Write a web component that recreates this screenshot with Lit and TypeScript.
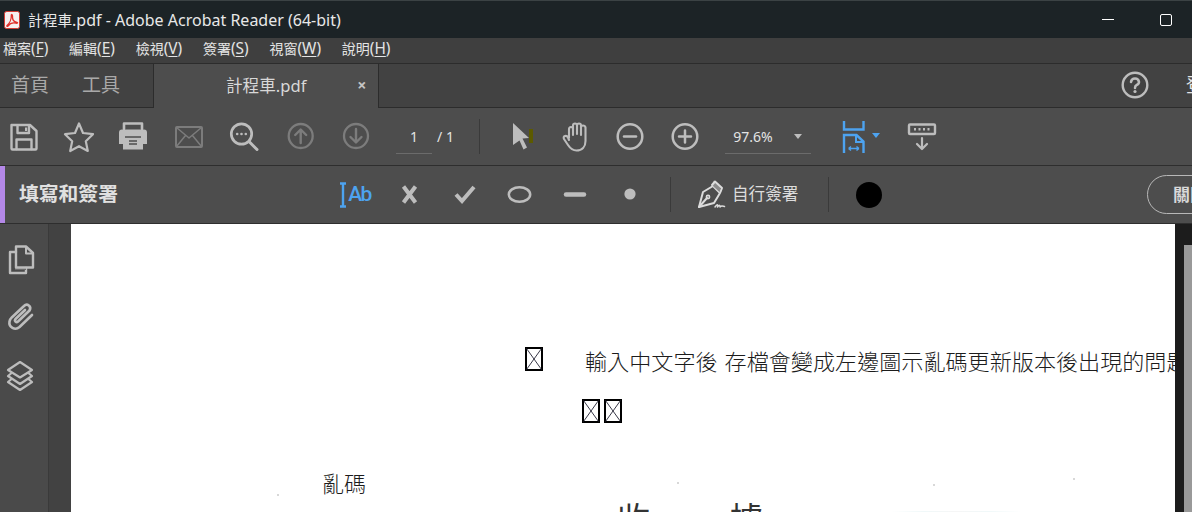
import { LitElement, html, css, svg } from "lit";
import { customElement } from "lit/decorators.js";

const ic = (w: number, h: number, body: unknown, cls = "") =>
  html`<svg class="ic ${cls}" width=${w} height=${h} viewBox="0 0 ${w} ${h}" fill="none" stroke="currentColor" stroke-linecap="round" stroke-linejoin="round">${body}</svg>`;

const icons = {
  pdf: ic(16, 18, svg`<rect x="0.5" y="0.5" width="15" height="17" rx="2" fill="#f6f0ef" stroke="#d23c34"/><path d="M3 14.5C5.5 12.5 7.5 8 7.3 4.5 7.2 3 8.6 3.2 8.5 5 8.2 8.5 10 11 13 11.3 14 11.5 13.6 12.6 12 12.2 9 11.5 6 12.2 4 15 3.2 15.8 2.4 15 3 14.5Z" stroke="#e0322b" stroke-width="1.3"/>`),
  save: ic(32, 32, svg`<g stroke-width="2.4"><path d="M3.5 4H22L28.5 10V27.5Q28.5 28.5 27.5 28.5H4.5Q3.5 28.5 3.5 27.5Z"/><path d="M9.5 4.5V12H21V4.5M8.5 28V18.5H23.5V28"/></g><rect x="17" y="6.5" width="2.2" height="3.5" fill="currentColor" stroke="none"/>`),
  star: ic(32, 32, svg`<path stroke-width="2.2" d="M16 2.5 20 12 30 13.2 22.8 20.3 24.8 30 16 25.2 7.2 30 9.2 20.3 2 13.2 12 12Z"/>`),
  print: ic(32, 32, svg`<g transform="translate(-2 -1)"><path stroke-width="2.6" d="M7 9V3.5H25V9"/><path fill="currentColor" stroke="none" d="M5 9.5H27Q30 9.5 30 12.5V24H26V29.5H6V24H2V12.5Q2 9.5 5 9.5Z"/><path stroke="#4d4d4d" stroke-width="1.6" stroke-linecap="butt" d="M8 17H24M12 21H20M12 24H20"/></g>`),
  mail: ic(32, 32, svg`<g transform="translate(-1 0)" stroke-width="2"><rect x="3" y="6" width="26" height="20" rx="1"/><path d="M3.5 6.5 16 17 28.5 6.5M3.5 25.5 12.5 14.5M28.5 25.5 19.5 14.5" stroke-width="1.5"/></g>`),
  search: ic(32, 32, svg`<g transform="translate(-1 -1)"><circle cx="13.5" cy="14" r="10.2" stroke-width="2.7"/><path stroke-width="3" d="M21.5 22 29 29.5"/><g fill="currentColor" stroke="none"><circle cx="9.2" cy="14" r="1.3"/><circle cx="13.5" cy="14" r="1.3"/><circle cx="17.8" cy="14" r="1.3"/></g></g>`),
  up: ic(32, 32, svg`<circle cx="16.7" cy="15" r="12" stroke-width="2.3"/><path stroke-width="2.4" d="M16.7 22V9M11.2 14 16.7 8.5 22.2 14"/>`),
  down: ic(32, 32, svg`<circle cx="16" cy="15" r="12" stroke-width="2.3"/><path stroke-width="2.4" d="M16 8V21M10.5 16 16 21.5 21.5 16"/>`),
  pointer: ic(32, 32, svg`<path fill="currentColor" stroke="none" d="M9 2 25 17 18.5 17.5 23 26.5 19.5 28.5 15.5 19.5 9 24Z"/><rect x="25" y="8" width="4" height="14" fill="#5c5a00" stroke="none"/>`),
  hand: ic(32, 32, svg`<g transform="translate(1 0)"><path stroke-width="2.1" d="M9 17V8.5Q9 6 11 6T13 8.5V14M13 14V4.5Q13 2.5 15 2.5T17 4.5V13M17 13V4.5Q17 2.5 19 2.5T21 4.5V14M21 14V6.5Q21 4.5 23 4.5T25.5 6.5V20C25.5 26 22 29.5 16.5 29.5 12 29.5 10 27 8 24L4 18Q3 15.5 5 15T8 16.5L9 19"/></g>`),
  minus: ic(32, 32, svg`<circle cx="16" cy="15.5" r="12.3" stroke-width="2.5"/><path stroke-width="2.5" d="M10 15.5H22"/>`),
  plus: ic(32, 32, svg`<circle cx="16" cy="15.5" r="12.3" stroke-width="2.5"/><path stroke-width="2.5" d="M10 15.5H22M16 9.5V21.5"/>`),
  fit: ic(24, 32, svg`<g stroke-width="2.4" stroke-linecap="butt" stroke-linejoin="miter"><path d="M3 0V8.5H22.5V0"/><path d="M3 32V14H15.5L22.5 20.5V32"/><path d="M15 14V21H22.5" stroke-width="2"/></g><path stroke-width="1.4" stroke-linecap="butt" d="M7.5 27.5H18M7.5 27.5 10 25.5M7.5 27.5 10 29.5M18 27.5 15.5 25.5M18 27.5 15.5 29.5"/>`),
  kb: ic(32, 32, svg`<rect x="3" y="3.5" width="26" height="9.5" rx="1" stroke-width="2.4"/><g fill="currentColor" stroke="none"><rect x="8" y="7" width="2" height="2.5"/><rect x="12.5" y="7" width="2" height="2.5"/><rect x="17" y="7" width="2" height="2.5"/><rect x="21.5" y="7" width="2" height="2.5"/></g><path stroke-width="2.2" d="M16 17V27.5M11 23 16 28 21 23"/>`),
  ibeam: ic(8, 26, svg`<path stroke-width="2.4" stroke-linecap="butt" d="M1 1.5H7M4 1.5V24.5M1 24.5H7"/>`),
  x: ic(32, 32, svg`<path stroke-width="4" stroke-linecap="butt" d="M9.5 7.5 21.5 23.5M21.5 7.5 9.5 23.5"/>`),
  check: ic(32, 32, svg`<path stroke-width="4" stroke-linecap="butt" stroke-linejoin="miter" d="M7 15.5 13 22 25 8"/>`),
  ellipse: ic(32, 32, svg`<ellipse cx="15.5" cy="15.5" rx="10.7" ry="7.2" stroke-width="2.5"/>`),
  dash: ic(32, 32, svg`<path stroke-width="4.5" d="M7 15.5H25"/>`),
  dot: ic(32, 32, svg`<circle cx="16" cy="15" r="5.6" fill="currentColor" stroke="none"/>`),
  pen: ic(30, 30, svg`<path stroke-width="2" d="M3 27 7 12 17 6 24 13 18 23Z"/><path fill="#8a8a8a" stroke="#8a8a8a" stroke-width="1" d="M18 1.5 24 7 24 12 17.5 6Z"/><path stroke-width="2" d="M3 27 11 18M16 5 19 1.5 26 8 24.5 12"/><circle cx="12" cy="17" r="1.6" stroke-width="1.6"/><path stroke-width="1.5" d="M19 27C21 24 22 24 21.5 27 23 24.5 24 24.5 24 27 25 25.5 26 26 28.5 26.5"/>`),
  help: ic(28, 28, svg`<circle cx="14" cy="14" r="12.3" stroke-width="2.4"/><path stroke-width="2.5" d="M10 11Q10.5 7.5 14 7.5T18 11Q18 13 15.5 14.2 14 15 14 17"/><circle cx="14" cy="20.5" r="1.6" fill="currentColor" stroke="none"/>`),
  pages: ic(32, 32, svg`<path stroke-width="2.4" d="M12 9H6V30H22V25"/><rect x="11" y="24" width="11" height="3" fill="#6b6b6b" stroke="none"/><path stroke-width="2.4" d="M12 3.5H22L29 10V24.5H12Z"/><path stroke-width="2" d="M22 4V10.5H29"/>`),
  clip: ic(32, 32, svg`<path stroke-width="2.6" d="M28 15 15.5 27C11 31 4.5 27 5.5 21.5 5.8 20 6.7 18.5 8 17.2L20 6C23 3 28 6 25.5 10.5L14 21.5C12.2 23 10 21 11.5 19L21 10"/>`),
  layers: ic(32, 32, svg`<g stroke-width="2.2"><path d="M16 3 28 11 16 18.5 4 11Z"/><path d="M7 14.5 4 17 16 25 28 17 25 14.5"/><path d="M7 20.5 4 23 16 31 28 23 25 20.5"/></g>`),
  tofu: ic(18, 24, svg`<rect x="1" y="1" width="16" height="22" stroke-width="2" stroke="#000" stroke-linejoin="miter"/><path stroke="#223" stroke-width="0.9" stroke-linecap="butt" d="M1.5 1.5 16.5 22.5M16.5 1.5 1.5 22.5"/>`),
};

@customElement("app-root")
export class AppRoot extends LitElement {
  static styles = css`
    :host { display: block; width: 1192px; height: 512px; overflow: hidden; font-family: "Noto Sans", "Noto Sans CJK TC", sans-serif; background: #4d4d4d; }
    .ic { display: block; flex: none; }
    .title { height: 38px; box-sizing: border-box; border-top: 1px solid #3b4244; background: #1c2326; color: #e8e8e8; display: flex; align-items: center; padding: 0 20px 0 4px; }
    .title .name { margin-left: 8px; white-space: nowrap; flex: 1; font-size: 16px; }
    .title .cjk { font-size: 14.7px; }
    .min { width: 12px; height: 1px; background: #fff; margin-right: 46px; }
    .max { width: 10px; height: 10px; border: 1.3px solid #fff; border-radius: 2px; }
    .menu { height: 26px; box-sizing: border-box; background: #3f3f3f; border-bottom: 1px solid #2c2c2c; color: #e4e4e4; display: flex; align-items: center; gap: 20.8px; padding: 0 0 3px 3px; font-size: 15.4px; line-height: 20px; }
    .menu b { font-weight: 400; font-size: 14px; }
    .menu u { text-underline-offset: 2px; }
    .tabs { height: 44px; box-sizing: border-box; background: #424242; border-bottom: 1px solid #2c2c2c; display: flex; align-items: stretch; }
    .home { width: 154px; display: flex; align-items: center; gap: 33px; padding: 0 0 4px 11px; box-sizing: border-box; font-size: 19px; color: #a9a9a9; border-right: 1px solid #2c2c2c; }
    .active { width: 225px; margin-bottom: -1px; box-sizing: border-box; background: #4d4d4d; border-right: 1px solid #2c2c2c; display: flex; align-items: center; color: #d8d8d8; font-size: 16.6px; padding: 0 0 2px 72px; }
    .active .close { margin-left: 51px; font-size: 16px; font-weight: 700; color: #c4c4c4; }
    .tab-right { flex: 1; display: flex; align-items: center; justify-content: flex-end; color: #bdbdbd; overflow: hidden; padding-bottom: 2px; }
    .login { width: 43px; flex: none; padding: 0 0 2px 37px; box-sizing: border-box; color: #e4e4e4; font-size: 19px; white-space: nowrap; overflow: hidden; }
    .tools { height: 58px; box-sizing: border-box; background: #4d4d4d; border-bottom: 1px solid #2e2e2e; display: flex; align-items: center; padding-left: 8px; color: #bdbdbd; }
    .btn { width: 32px; height: 32px; flex: none; margin-right: 23.3px; display: flex; align-items: center; justify-content: center; }
    .off { color: #7c7c7c; }
    .field { height: 34px; box-sizing: border-box; border-bottom: 1px solid #6b6b6b; display: flex; align-items: center; color: #e4e4e4; font-size: 14px; flex: none; }
    .page { width: 36px; justify-content: center; margin-left: 1px; }
    .of { margin-left: 5px; color: #e4e4e4; font-size: 14px; width: 42px; white-space: nowrap; }
    .vsep { width: 1px; height: 35px; background: #3a3a3a; flex: none; }
    .s1 { margin-right: 23.5px; }
    .zoom { width: 86px; margin-left: 0.5px; padding-left: 8px; box-sizing: border-box; justify-content: space-between; padding-right: 9px; margin-right: 30px; }
    .caret { width: 0; height: 0; border-left: 4px solid transparent; border-right: 4px solid transparent; border-top: 5px solid #bdbdbd; flex: none; }
    .fit { color: #4da3f0; margin-right: 0; width: 24px; }
    .caret.blue { border-top-color: #4da3f0; margin: 0 26px 3px 7px; border-left-width: 4.5px; border-right-width: 4.5px; }
    .sign { height: 58px; box-sizing: border-box; background: #4d4d4d; border-bottom: 1px solid #2e2e2e; display: flex; align-items: center; color: #bdbdbd; overflow: hidden; }
    .strip { width: 5px; align-self: stretch; background: #b488e8; flex: none; }
    .sign h1 { margin: 0 0 4px 14px; width: 308.5px; flex: none; font-size: 19.8px; font-weight: 700; color: #e0e0e0; white-space: nowrap; }
    .slot { width: 55px; height: 32px; flex: none; display: flex; align-items: center; justify-content: center; }
    .iab { color: #4da3f0; gap: 1px; font: 500 21px/1 Roboto, sans-serif; letter-spacing: -1.5px; }
    .iab span { margin-top: -1px; }
    .s2 { margin-left: 12.5px; }
    .self { display: flex; align-items: center; gap: 6px; margin-left: 25px; color: #dcdcdc; font-size: 16.6px; width: 132px; flex: none; white-space: nowrap; }
    .self span { margin-bottom: 4px; }
    .ink { width: 26px; height: 26px; border-radius: 50%; background: #000; margin-left: 27px; flex: none; }
    .pill { margin-left: 265px; width: 90px; height: 39px; box-sizing: border-box; border: 1.5px solid #b8b8b8; border-radius: 20px; flex: none; padding: 0 0 3px 25px; display: flex; align-items: center; color: #d8d8d8; font-size: 17px; font-weight: 700; white-space: nowrap; margin-right: -60px; }
    .body { height: 288px; display: flex; }
    .side { width: 49px; box-sizing: border-box; background: #4a4a4a; border-right: 1px solid #3a3a3a; color: #bdbdbd; display: flex; flex-direction: column; align-items: center; gap: 25px; padding: 19px 9px 0 0; flex: none; }
    .side svg:last-child { margin-top: 2px; }
    .gutter { width: 22px; background: #424242; flex: none; }
    .paper { position: relative; width: 1104px; background: #fff; overflow: hidden; color: #222; flex: none; font-family: "Noto Sans CJK TC", sans-serif; }
    .paper > * { position: absolute; white-space: nowrap; }
    .line { left: 514px; top: 117px; font-size: 22.1px; line-height: 38px; font-weight: 300; color: #1c1c1c; }
    .line span { margin-left: 7px; }
    .t1 { left: 454px; top: 123px; }
    .t2 { left: 511px; top: 175px; }
    .t3 { left: 533px; top: 175px; }
    .garb { left: 251px; top: 239px; font-size: 22px; line-height: 38px; font-weight: 300; color: #1c1c1c; }
    .big { left: 546px; top: 268px; font-size: 33px; line-height: 50px; color: #333; display: flex; gap: 80px; }
    .speck { width: 2px; height: 2px; background: #d8d8d8; }
    .sp1 { left: 606px; top: 258px; }
    .sp2 { left: 862px; top: 260px; }
    .sp3 { left: 1002px; top: 254px; }
    .sp4 { left: 206px; top: 270px; }
    .faint { left: 820px; top: 287px; width: 130px; height: 1px; background: linear-gradient(90deg, transparent, #f0f8f9, #f6f6f6, #f0f8f9, transparent); }
    .track { width: 17px; flex: none; background: #1c1c1c; padding: 21px 0 0 9px; box-sizing: border-box; }
    .thumb { height: 100%; background: #999; }
  `;

  render() {
    const menu: [string, string][] = [["檔案", "F"], ["編輯", "E"], ["檢視", "V"], ["簽署", "S"], ["視窗", "W"], ["說明", "H"]];
    return html`
      <div class="title">${icons.pdf}<span class="name"><span class="cjk">計程車</span>.pdf - Adobe Acrobat Reader (64-bit)</span><i class="min"></i><i class="max"></i></div>
      <div class="menu">${menu.map(([t, k]) => html`<span><b>${t}</b>(<u>${k}</u>)</span>`)}</div>
      <div class="tabs">
        <div class="home"><span>首頁</span><span>工具</span></div>
        <div class="active"><span>計程車.pdf</span><span class="close">×</span></div>
        <div class="tab-right">${icons.help}<div class="login">登入</div></div>
      </div>
      <div class="tools">
        <div class="btn">${icons.save}</div>
        <div class="btn">${icons.star}</div>
        <div class="btn">${icons.print}</div>
        <div class="btn off">${icons.mail}</div>
        <div class="btn">${icons.search}</div>
        <div class="btn off">${icons.up}</div>
        <div class="btn off">${icons.down}</div>
        <div class="field page">1</div>
        <div class="of">/ 1</div>
        <div class="vsep s1"></div>
        <div class="btn">${icons.pointer}</div>
        <div class="btn">${icons.hand}</div>
        <div class="btn">${icons.minus}</div>
        <div class="btn">${icons.plus}</div>
        <div class="field zoom"><span>97.6%</span><i class="caret"></i></div>
        <div class="btn fit">${icons.fit}</div>
        <i class="caret blue"></i>
        <div class="btn">${icons.kb}</div>
      </div>
      <div class="sign">
        <div class="strip"></div>
        <h1>填寫和簽署</h1>
        <div class="slot iab">${icons.ibeam}<span>Ab</span></div>
        <div class="slot">${icons.x}</div>
        <div class="slot">${icons.check}</div>
        <div class="slot">${icons.ellipse}</div>
        <div class="slot">${icons.dash}</div>
        <div class="slot">${icons.dot}</div>
        <div class="vsep s2"></div>
        <div class="self">${icons.pen}<span>自行簽署</span></div>
        <div class="vsep"></div>
        <div class="ink"></div>
        <div class="pill">關閉</div>
      </div>
      <div class="body">
        <div class="side">${icons.pages}${icons.clip}${icons.layers}</div>
        <div class="gutter"></div>
        <div class="paper">
          <div class="t1">${icons.tofu}</div>
          <div class="line">輸入中文字後<span>存檔會變成左邊圖示亂碼更新版本後出現的問題</span></div>
          <div class="t2">${icons.tofu}</div>
          <div class="t3">${icons.tofu}</div>
          <div class="garb">亂碼</div>
          <div class="big"><span>收</span><span>據</span></div>
          <i class="speck sp1"></i><i class="speck sp2"></i><i class="speck sp3"></i><i class="speck sp4"></i>
          <i class="faint"></i>
        </div>
        <div class="track"><div class="thumb"></div></div>
      </div>
    `;
  }
}
